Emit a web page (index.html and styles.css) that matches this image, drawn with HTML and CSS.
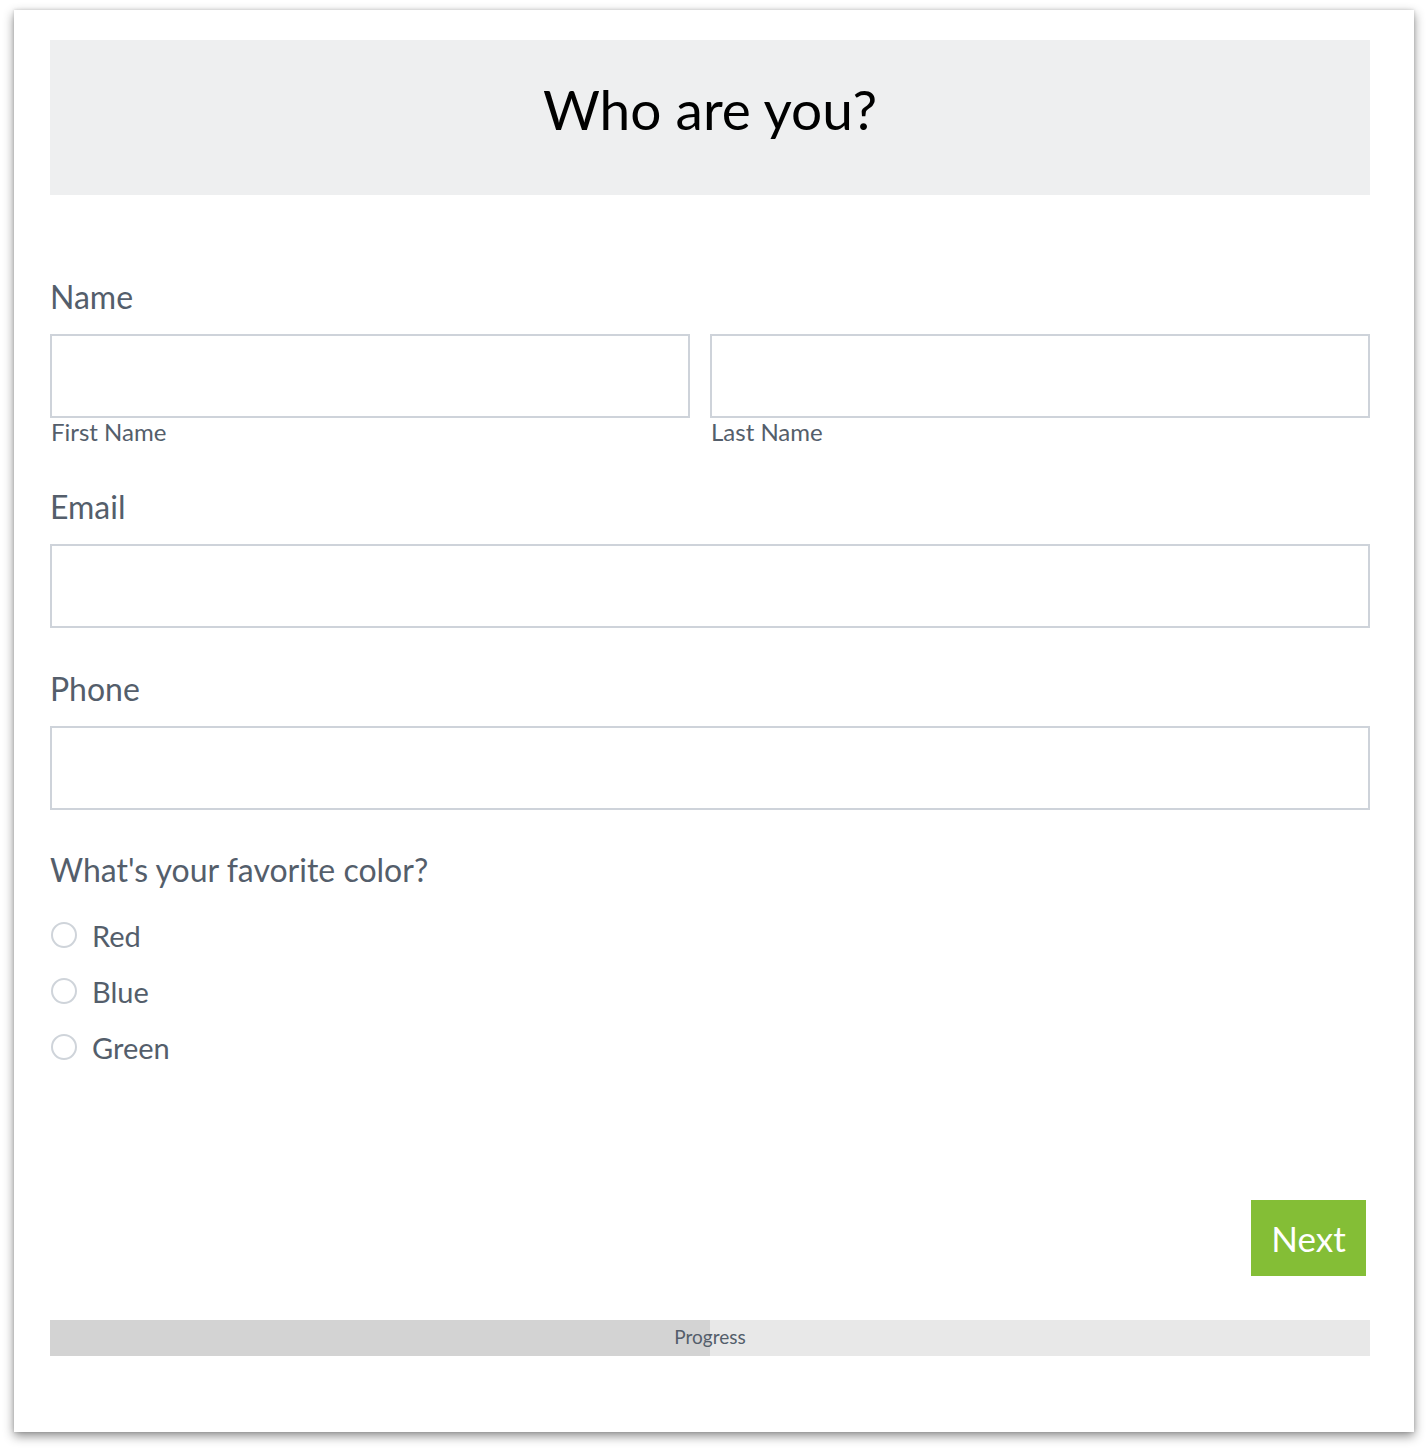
FILE: index.html
```html
<!DOCTYPE html>
<html lang="en">
<head>
<meta charset="utf-8">
<title>Who are you?</title>
<link rel="stylesheet" href="styles.css">
</head>
<body>
<div class="card">
  <header class="header"><h1 class="title">Who are you?</h1></header>
  <form class="form">
    <div class="field field-name">
      <div class="label">Name</div>
      <div class="name-grid">
        <div class="sub">
          <input class="input" type="text">
          <div class="sublabel">First Name</div>
        </div>
        <div class="sub">
          <input class="input" type="text">
          <div class="sublabel">Last Name</div>
        </div>
      </div>
    </div>
    <div class="field">
      <div class="label">Email</div>
      <input class="input" type="text">
    </div>
    <div class="field">
      <div class="label">Phone</div>
      <input class="input" type="text">
    </div>
    <div class="field">
      <div class="label label-q">What's your favorite color?</div>
      <div class="radios">
        <label class="radio"><span class="circle"></span><span>Red</span></label>
        <label class="radio"><span class="circle"></span><span>Blue</span></label>
        <label class="radio"><span class="circle"></span><span>Green</span></label>
      </div>
    </div>
    <div class="actions"><button class="next" type="button">Next</button></div>
    <div class="progress">
      <div class="progress-fill" style="width:50%"></div>
      <div class="progress-text">Progress</div>
    </div>
  </form>
</div>
</body>
</html>
```
FILE: styles.css
```css
html, body {
  margin: 0;
  padding: 0;
  background: #ffffff;
}
body {
  font-family: Lato, "Open Sans", sans-serif;
  padding: 10px 14px 18px 14px;
}
.card {
  width: 1400px;
  height: 1422px;
  box-sizing: border-box;
  background: #fff;
  padding: 30px 44px 0 36px;
  box-shadow: 0 4px 10px rgba(0,0,0,0.45), 0 0 3px rgba(0,0,0,0.15);
}
.header {
  height: 155px;
  background: #eeeff0;
  display: flex;
  align-items: center;
  justify-content: center;
}
.title {
  margin: 0;
  font-weight: 400;
  font-size: 55px;
  color: #000;
  line-height: 1;
  padding-bottom: 16px;
}
.form {
  padding-top: 82px;
}
.field {
  margin-bottom: 41px;
}
.label {
  font-size: 32px;
  line-height: 36px;
  color: #545e6b;
  padding-top: 2px;
  margin-bottom: 19px;
}
.label-q {
  padding-top: 1px;
  margin-bottom: 19px;
}
.name-grid {
  display: grid;
  grid-template-columns: 640px 1fr;
  gap: 20px;
}
.input {
  display: block;
  width: 100%;
  height: 84px;
  box-sizing: border-box;
  border: 2px solid #ced3da;
  border-radius: 0;
  margin: 0;
  background: #fff;
  font: inherit;
}
.sublabel {
  font-size: 24px;
  line-height: 28px;
  color: #545e6b;
  padding-left: 1px;
}
.radios {
  display: flex;
  flex-direction: column;
}
.radio {
  display: flex;
  align-items: center;
  height: 56px;
  font-size: 29px;
  color: #545e6b;
}
.circle {
  width: 22px;
  height: 22px;
  border: 2px solid #cfd4da;
  border-radius: 50%;
  margin-left: 1px;
  margin-right: 15px;
  flex: none;
}
.actions {
  display: flex;
  justify-content: flex-end;
  margin-top: 125px;
  padding-right: 4px;
}
.next {
  width: 115px;
  height: 76px;
  border: none;
  background: #84be36;
  color: #fff;
  font-family: Lato, "Open Sans", sans-serif;
  font-size: 35px;
  padding: 0;
}
.progress {
  position: relative;
  margin-top: 44px;
  height: 36px;
  background: #e8e8e8;
}
.progress-fill {
  height: 100%;
  background: #d3d3d3;
}
.progress-text {
  position: absolute;
  inset: 0;
  display: flex;
  align-items: center;
  justify-content: center;
  font-size: 19px;
  color: #545e6b;
  padding-bottom: 3px;
}
```
